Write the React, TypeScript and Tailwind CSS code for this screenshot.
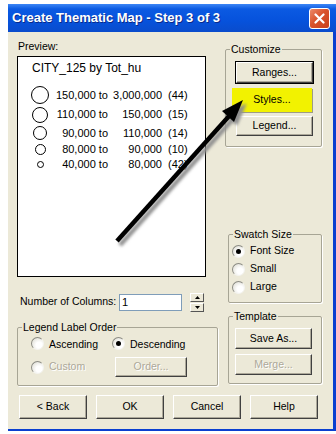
import React from "react"

const btn =
  "flex items-center justify-center bg-[#ece9d8] text-[10.5px] text-black border border-t-white border-l-white border-b-[#404040] border-r-[#404040] shadow-[inset_-1px_-1px_0_#aca899]"
const btnDisabled =
  "flex items-center justify-center bg-[#ece9d8] text-[10.5px] text-[#aca899] [text-shadow:1px_1px_0_#fff] border border-t-white border-l-white border-b-[#404040] border-r-[#404040] shadow-[inset_-1px_-1px_0_#aca899]"
const group = "border border-[#a7a595] rounded-[2px] shadow-[1px_1px_0_#fff]"
const groupLegend = "ml-[4px] px-[1px] text-[10.5px] leading-[13px] text-black"

interface IRadioProps {
  label: string
  checked?: boolean
  disabled?: boolean
}

const Radio: React.FC<IRadioProps> = ({ label, checked, disabled }) => (
  <div className="flex items-center gap-[5px]">
    <span className="relative flex h-[13px] w-[13px] items-center justify-center rounded-full border border-t-[#8c8c84] border-l-[#8c8c84] border-b-[#f4f4f0] border-r-[#f4f4f0] bg-[radial-gradient(circle_at_65%_65%,#ffffff_30%,#d8d7cc_100%)]">
      {checked && <span className="h-[5px] w-[5px] rounded-full bg-black" />}
    </span>
    <span
      className={
        disabled
          ? "text-[10.5px] text-[#aca899] [text-shadow:1px_1px_0_#fff]"
          : "text-[10.5px] text-black"
      }
    >
      {label}
    </span>
  </div>
)

const legendRows = [
  { size: 18, h: 20, from: "150,000 to", to: "3,000,000", n: "(44)" },
  { size: 16, h: 19, from: "110,000 to", to: "150,000", n: "(15)" },
  { size: 14, h: 18, from: "90,000 to", to: "110,000", n: "(14)" },
  { size: 11, h: 14, from: "80,000 to", to: "90,000", n: "(10)" },
  { size: 7, h: 16, from: "40,000 to", to: "80,000", n: "(42)" },
]

const Arrow: React.FC = () => (
  <svg className="pointer-events-none absolute left-0 top-0" width="336" height="434">
    <defs>
      <filter id="blur" x="-20%" y="-20%" width="140%" height="140%">
        <feGaussianBlur stdDeviation="1.6" />
      </filter>
    </defs>
    <g filter="url(#blur)" fill="#8f8f8f" stroke="#8f8f8f">
      <line x1="120" y1="245" x2="232" y2="120" strokeWidth="4.5" />
      <polygon points="246,104 237,125 225,115" />
    </g>
    <line x1="117" y1="241" x2="230" y2="115" stroke="#000" strokeWidth="4.5" />
    <polygon points="243,100 234,122 222,111" fill="#000" />
  </svg>
)

const App: React.FC = () => {
  return (
    <div className="relative h-[434px] w-[336px] overflow-hidden bg-white font-['Liberation_Sans',Arial,sans-serif]">
      <div className="ml-[8px] mt-[4px] w-[328px]">
        {/* title bar */}
        <div className="flex h-[28px] items-center justify-between bg-[linear-gradient(180deg,#3d86f5_0%,#0b5ae2_18%,#0652dc_60%,#0a4ccc_100%)] pl-[4px] pr-[6px]">
          <span className="text-[13px] font-bold text-white [text-shadow:1px_1px_0_#0a2a8a]">
            Create Thematic Map - Step 3 of 3
          </span>
          <span className="flex h-[21px] w-[21px] items-center justify-center rounded-[3px] border border-white bg-[linear-gradient(135deg,#ec8a6a_0%,#d9532c_45%,#c8401c_100%)]">
            <svg width="11" height="11" viewBox="0 0 11 11">
              <path d="M1.5 1.5 L9.5 9.5 M9.5 1.5 L1.5 9.5" stroke="#fff" strokeWidth="2.2" strokeLinecap="round" />
            </svg>
          </span>
        </div>

        {/* body */}
        <div className="flex h-[399px] flex-col border-b-2 border-r-[3px] border-[#0a3fd0] bg-[#ece9d8]">
          <div className="flex pl-[9px]">
            {/* left column */}
            <div className="flex w-[201px] flex-col pt-[8px]">
              <div className="h-[13px] pl-[1px] text-[10.5px] leading-[13px] text-black">Preview:</div>
              <div className="mt-[3px] h-[221px] w-[189px] border border-black bg-white">
                <div className="pl-[14px] pt-[4px] text-[12px] leading-[14px] text-black">CITY_125 by Tot_hu</div>
                <div className="mt-[10px] flex flex-col">
                  {legendRows.map((row) => (
                    <div key={row.n} className="flex items-center text-[11px] text-black" style={{ height: row.h }}>
                      <div className="flex w-[33px] justify-end">
                        <div className="flex w-[22px] justify-center">
                          <span
                            className="rounded-full border border-black"
                            style={{ width: row.size, height: row.size }}
                          />
                        </div>
                      </div>
                      <span className="w-[57px] text-right">{row.from}</span>
                      <span className="w-[54px] text-right">{row.to}</span>
                      <span className="ml-[6px]">{row.n}</span>
                    </div>
                  ))}
                </div>
              </div>

              <div className="mt-[16px] flex h-[18px] items-center">
                <span className="w-[102px] pl-[3px] text-[10.5px] text-black">Number of Columns:</span>
                <div className="flex h-[17px] w-[63px] items-center border border-t-[#7f9db9] border-l-[#7f9db9] border-b-[#7f9db9] border-r-[#7f9db9] bg-white pl-[2px] text-[11px] text-black">
                  1
                </div>
                <div className="ml-[8px] flex h-[19px] w-[14px] flex-col gap-[1px]">
                  <span className="flex flex-1 items-center justify-center border border-t-white border-l-white border-b-[#555] border-r-[#555] bg-[#ece9d8]">
                    <svg width="5" height="3" viewBox="0 0 5 3">
                      <path d="M2.5 0 L5 3 L0 3 Z" fill="#000" />
                    </svg>
                  </span>
                  <span className="flex flex-1 items-center justify-center border border-t-white border-l-white border-b-[#555] border-r-[#555] bg-[#ece9d8]">
                    <svg width="5" height="3" viewBox="0 0 5 3">
                      <path d="M0 0 L5 0 L2.5 3 Z" fill="#000" />
                    </svg>
                  </span>
                </div>
              </div>

              <fieldset className={`mt-[10px] ${group} pb-[8px]`}>
                <legend className={groupLegend}>Legend Label Order</legend>
                <div className="grid grid-cols-[81px_1fr] pl-[13px] pt-[3px]">
                  <div className="h-[12px] leading-[12px]">
                    <Radio label="Ascending" />
                  </div>
                  <div className="h-[12px] leading-[12px]">
                    <Radio label="Descending" checked />
                  </div>
                  <div className="mt-[8px] flex h-[20px] items-center">
                    <Radio label="Custom" disabled />
                  </div>
                  <div className="mt-[8px] h-[20px] pl-[3px]">
                    <div className={`${btnDisabled} h-[20px] w-[72px]`}>Order...</div>
                  </div>
                </div>
              </fieldset>
            </div>

            {/* right column */}
            <div className="ml-[7px] flex w-[97px] flex-col pt-[11px]">
              <fieldset className={`${group} pb-[10px]`}>
                <legend className={groupLegend}>Customize</legend>
                <div className="flex flex-col">
                  <div className="ml-[10px] mt-[6px] h-[21px] w-[77px] outline outline-1 outline-black">
                    <div className={`${btn} h-full w-full`}>Ranges...</div>
                  </div>
                  <div className="ml-[6px] mt-[5px] flex h-[24px] w-[80px] items-center justify-center bg-[#f2f200] text-[10.5px] text-black shadow-[1px_1px_0_#9d9b85]">
                    Styles...
                  </div>
                  <div className={`${btn} ml-[10px] mt-[4px] h-[20px] w-[77px]`}>Legend...</div>
                </div>
              </fieldset>

              <fieldset className={`ml-[3px] mt-[81px] ${group} pb-[6px]`}>
                <legend className={groupLegend}>Swatch Size</legend>
                <div className="flex flex-col pl-[3px] pt-[1px]">
                  <div className="flex h-[18px] items-center">
                    <Radio label="Font Size" checked />
                  </div>
                  <div className="flex h-[18px] items-center">
                    <Radio label="Small" />
                  </div>
                  <div className="flex h-[18px] items-center">
                    <Radio label="Large" />
                  </div>
                </div>
              </fieldset>

              <fieldset className={`ml-[3px] mt-[7px] ${group} pb-[8px]`}>
                <legend className={groupLegend}>Template</legend>
                <div className="flex flex-col pl-[6px]">
                  <div className={`${btn} mt-[5px] h-[21px] w-[77px]`}>Save As...</div>
                  <div className={`${btnDisabled} mt-[5px] h-[21px] w-[77px]`}>Merge...</div>
                </div>
              </fieldset>
            </div>
          </div>

          {/* bottom buttons */}
          <div className="ml-[11px] mt-[9px] flex gap-[9px]">
            <div className={`${btn} h-[24px] w-[68px]`}>&lt; Back</div>
            <div className={`${btn} h-[24px] w-[68px]`}>OK</div>
            <div className={`${btn} h-[24px] w-[68px]`}>Cancel</div>
            <div className={`${btn} h-[24px] w-[68px]`}>Help</div>
          </div>
        </div>
      </div>
      <Arrow />
    </div>
  )
}

export default App
